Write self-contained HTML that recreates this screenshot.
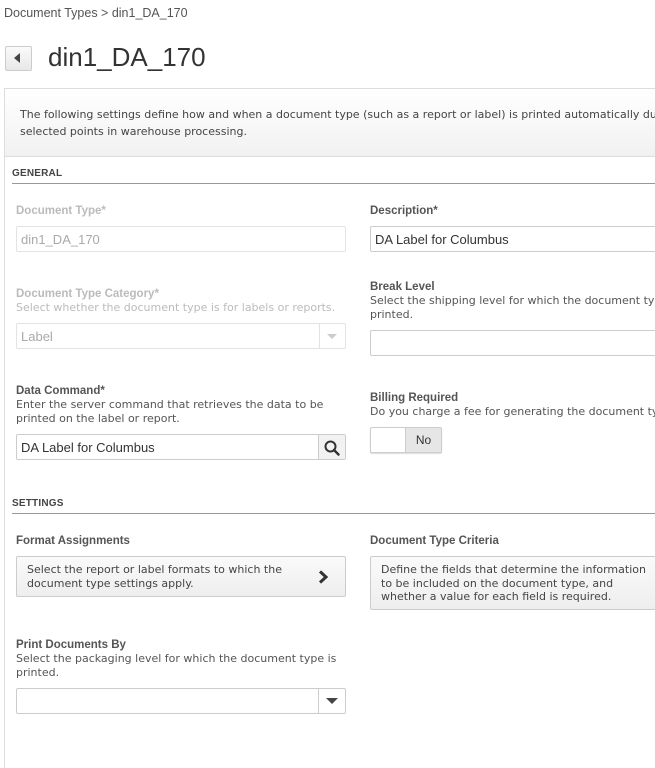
<!DOCTYPE html>
<html><head><meta charset="utf-8"><style>
*{box-sizing:border-box;margin:0;padding:0}
body{width:655px;height:744px;overflow:hidden;background:#fff;font-family:"Liberation Sans","DejaVu Sans",sans-serif;color:#444;font-size:12px;position:relative}
.a{position:absolute;white-space:nowrap}
.lbl{font-weight:bold;color:#555;font-size:11.5px}
.dis{color:#bbb}
.hint{font-family:"DejaVu Sans",sans-serif;font-size:11px;color:#555;line-height:13.5px}
.inp{position:absolute;height:26px;border:1px solid #ccc;border-radius:2px;background:#fff;font-size:13px;padding:5px 4px;color:#333;white-space:nowrap;overflow:hidden}
.sec{font-weight:bold;font-size:10px;color:#444;letter-spacing:.2px}
.line{position:absolute;height:1px;background:#999;left:12px;right:0}
.btn{position:absolute;border:1px solid #ccc;border-radius:2px;background:linear-gradient(#fafafa,#eee);font-family:"DejaVu Sans",sans-serif;font-size:11px;color:#444;line-height:13.5px;padding:6px 10px}
</style></head><body>
<div class="a" style="left:4px;top:6px;font-size:12.5px;color:#555">Document Types &gt; din1_DA_170</div>
<div class="a" style="left:5px;top:46px;width:27px;height:25px;border:1px solid #ccc;border-radius:2px;background:linear-gradient(#fafafa,#e8e8e8)"></div>
<div class="a" style="left:14px;top:53px;width:0;height:0;border-top:5px solid transparent;border-bottom:5px solid transparent;border-right:6px solid #444"></div>
<div class="a" style="left:48px;top:42px;font-size:26px;color:#333">din1_DA_170</div>
<div class="a" style="left:4px;top:88px;width:660px;height:680px;border-left:1px solid #ddd;border-top:1px solid #ddd"></div>
<div class="a" style="left:5px;top:89px;width:660px;height:68px;background:linear-gradient(#fff,#f1f1f1);border-bottom:1px solid #ddd"></div>
<div class="a" style="left:20px;top:106px;font-family:'DejaVu Sans',sans-serif;font-size:11px;line-height:17px;color:#444">The following settings define how and when a document type (such as a report or label) is printed automatically during<br>selected points in warehouse processing.</div>
<div class="a sec" style="left:12px;top:168px">GENERAL</div><div class="line" style="top:183px"></div>

<div class="a lbl dis" style="left:16px;top:205px">Document Type*</div>
<div class="inp" style="left:16px;top:226px;width:330px;color:#aaa;border-color:#e3e3e3">din1_DA_170</div>
<div class="a lbl dis" style="left:16px;top:288px">Document Type Category*</div>
<div class="a hint dis" style="left:16px;top:301px;color:#bbb">Select whether the document type is for labels or reports.</div>
<div class="inp" style="left:16px;top:323px;width:330px;color:#aaa;border-color:#e3e3e3">Label</div>
<div class="a" style="left:319px;top:324px;width:1px;height:24px;background:#e3e3e3"></div>
<div class="a" style="left:327px;top:334px;border-left:5px solid transparent;border-right:5px solid transparent;border-top:5px solid #ccc"></div>

<div class="a lbl" style="left:16px;top:385px">Data Command*</div>
<div class="a hint" style="left:16px;top:398px">Enter the server command that retrieves the data to be<br>printed on the label or report.</div>
<div class="inp" style="left:16px;top:434px;width:330px">DA Label for Columbus</div>
<div class="a" style="left:318px;top:435px;width:27px;height:24px;border-left:1px solid #ccc;background:#f2f2f2"></div>
<svg class="a" style="left:323px;top:439px" width="18" height="18" viewBox="0 0 18 18"><circle cx="7.5" cy="7.5" r="5" fill="none" stroke="#333" stroke-width="2"/><path d="M11 11l4.5 4.5" stroke="#333" stroke-width="2.5" stroke-linecap="round"/></svg>

<div class="a lbl" style="left:370px;top:205px">Description*</div>
<div class="inp" style="left:370px;top:226px;width:300px">DA Label for Columbus</div>
<div class="a lbl" style="left:370px;top:281px">Break Level</div>
<div class="a hint" style="left:370px;top:294px">Select the shipping level for which the document type is<br>printed.</div>
<div class="inp" style="left:370px;top:330px;width:300px"></div>
<div class="a lbl" style="left:370px;top:392px">Billing Required</div>
<div class="a hint" style="left:370px;top:405px">Do you charge a fee for generating the document type?</div>
<div class="a" style="left:370px;top:427px;width:72px;height:26px;border:1px solid #ccc;border-radius:2px;background:#fff;box-shadow:0 1px 1px #ddd"></div>
<div class="a" style="left:405px;top:428px;width:36px;height:24px;background:#e6e6e6;border-left:1px solid #ccc;text-align:center;line-height:24px;font-size:12px;color:#333">No</div>

<div class="a sec" style="left:12px;top:498px">SETTINGS</div><div class="line" style="top:513px"></div>

<div class="a lbl" style="left:16px;top:535px">Format Assignments</div>
<div class="btn" style="left:16px;top:556px;width:330px;height:41px">Select the report or label formats to which the<br>document type settings apply.</div>
<svg class="a" style="left:318px;top:570px" width="12" height="14" viewBox="0 0 12 14"><path d="M2 1.5l6 5.5-6 5.5" fill="none" stroke="#333" stroke-width="3"/></svg>
<div class="a lbl" style="left:370px;top:535px">Document Type Criteria</div>
<div class="btn" style="left:370px;top:556px;width:300px;height:54px">Define the fields that determine the information<br>to be included on the document type, and<br>whether a value for each field is required.</div>

<div class="a lbl" style="left:16px;top:639px">Print Documents By</div>
<div class="a hint" style="left:16px;top:652px">Select the packaging level for which the document type is<br>printed.</div>
<div class="inp" style="left:16px;top:688px;width:330px"></div>
<div class="a" style="left:318px;top:689px;width:1px;height:24px;background:#ccc"></div>
<div class="a" style="left:326px;top:698px;border-left:6px solid transparent;border-right:6px solid transparent;border-top:6px solid #444"></div>
</body></html>
